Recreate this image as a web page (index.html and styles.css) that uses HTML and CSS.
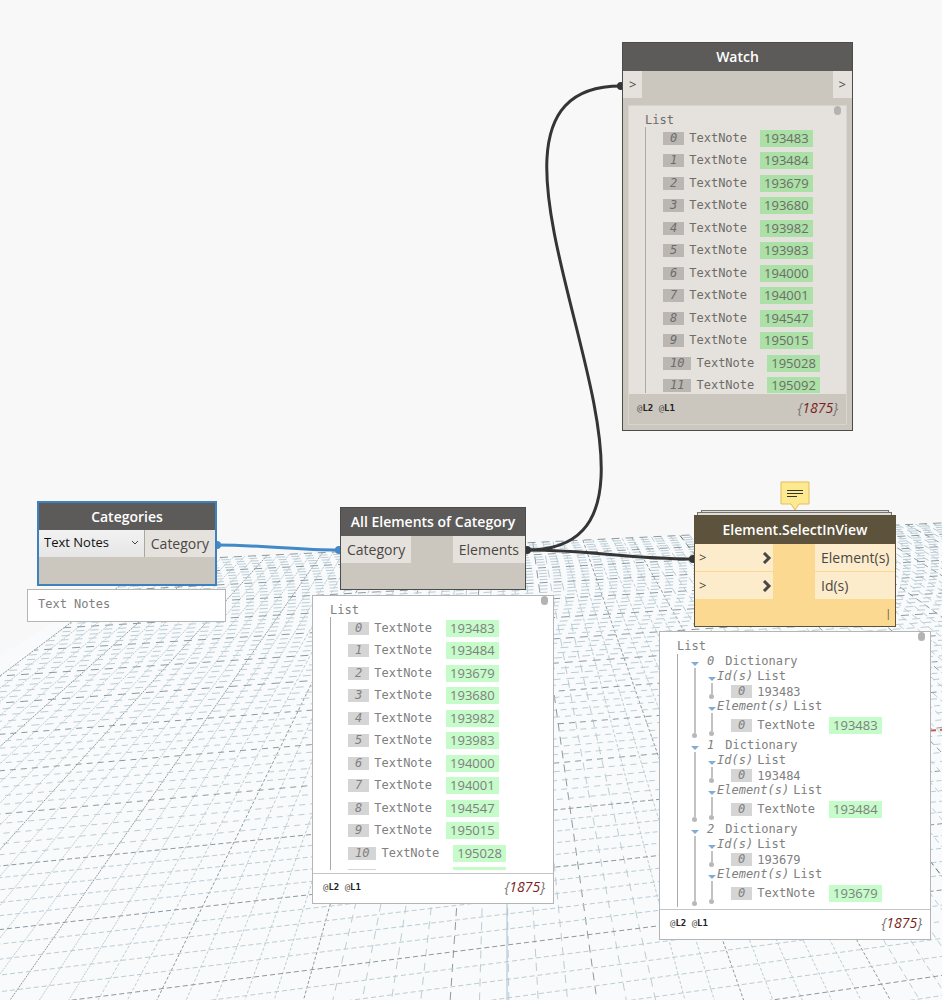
FILE: index.html
```html
<!DOCTYPE html>
<html lang="en">
<head>
<meta charset="utf-8">
<meta name="viewport" content="width=device-width, initial-scale=1">
<title>Node graph</title>
<link rel="stylesheet" href="styles.css">
</head>
<body>
<main class="workspace">
  <svg class="ground" id="ground" aria-hidden="true"></svg>

  <svg class="wires" aria-hidden="true">
    <path class="wire wire-active" d="M217 545C262 545 295 550 340 550"/>
    <path class="wire" d="M527 550C738 550 410 86 621 86"/>
    <path class="wire" d="M527 550C595 550 625 559 693 559"/>
    <circle class="plug-active" cx="217" cy="545" r="4"/>
    <circle class="plug-active" cx="339" cy="550" r="4"/>
    <circle class="plug" cx="527" cy="550" r="4"/>
    <circle class="plug" cx="621" cy="86" r="4"/>
    <circle class="plug" cx="693" cy="559" r="4"/>
  </svg>

  <section class="node node-watch">
    <h2 class="node-title">Watch</h2>
    <div class="ports">
      <span class="port port-tiny">&gt;</span>
      <span class="port port-tiny">&gt;</span>
    </div>
    <div class="panel panel-inset">
      <div class="panel-list">
        <p class="list-head">List</p>
        <ol class="items" data-count="12"></ol>
      </div>
      <footer class="panel-foot">
        <span class="levels"><i>@</i>L2 <i>@</i>L1</span>
        <span class="total"><i>{</i>1875<i>}</i></span>
      </footer>
      <span class="thumb"></span>
    </div>
  </section>

  <section class="node node-categories">
    <h2 class="node-title">Categories</h2>
    <div class="ports">
      <label class="picker">
        <select class="picker-select" aria-label="Category name"><option>Text Notes</option></select>
        <svg class="picker-arrow" viewBox="0 0 8 6" aria-hidden="true"><path d="M1 1l3 3 3-3"/></svg>
      </label>
      <span class="port port-last">Category</span>
    </div>
  </section>
  <p class="panel preview">Text Notes</p>

  <section class="node node-elements">
    <h2 class="node-title">All Elements of Category</h2>
    <div class="ports">
      <span class="port">Category</span>
      <span class="port">Elements</span>
    </div>
  </section>
  <div class="panel panel-elements">
    <div class="panel-list">
      <p class="list-head">List</p>
      <ol class="items" data-count="12"></ol>
    </div>
    <footer class="panel-foot">
      <span class="levels"><i>@</i>L2 <i>@</i>L1</span>
      <span class="total"><i>{</i>1875<i>}</i></span>
    </footer>
    <span class="thumb"></span>
  </div>

  <div class="sheet sheet-back"></div>
  <div class="sheet sheet-front"></div>
  <section class="node node-select">
    <h2 class="node-title">Element.SelectInView</h2>
    <div class="port-table">
      <span class="port port-wide">&gt;<svg class="chevron" viewBox="0 0 10 12" aria-hidden="true"><path d="M2 1l5 5-5 5"/></svg></span>
      <span class="port port-out">Element(s)</span>
      <span class="port port-wide">&gt;<svg class="chevron" viewBox="0 0 10 12" aria-hidden="true"><path d="M2 1l5 5-5 5"/></svg></span>
      <span class="port port-out">Id(s)</span>
    </div>
    <div class="lacing">|</div>
  </section>
  <svg class="note" viewBox="0 0 30 30" aria-hidden="true">
    <path class="note-shape" d="M1 1H29V23H19L15 29L11 23H1Z"/>
    <path class="note-lines" d="M7 9.500H23M7 12.500H23M7 15.500H17"/>
  </svg>
  <div class="panel panel-select">
    <div class="panel-list">
      <p class="list-head">List</p>
      <div class="items tree" id="tree"></div>
    </div>
    <footer class="panel-foot">
      <span class="levels"><i>@</i>L2 <i>@</i>L1</span>
      <span class="total"><i>{</i>1875<i>}</i></span>
    </footer>
    <span class="thumb"></span>
  </div>
</main>
<script src="graph.js"></script>
</body>
</html>
```

FILE: styles.css
```css
* { box-sizing: border-box; }

body {
  margin: 0;
  background: #f8f8f8;
  font-family: "Open Sans", "Noto Sans", sans-serif;
  color: #4a4845;
}

h2, p, ol { margin: 0; padding: 0; list-style: none; }

.workspace {
  position: relative;
  min-height: 100vh;
  overflow: hidden;
}

.ground, .wires {
  position: absolute;
  inset: 0;
  width: 100%;
  height: 100%;
}
.ground path { fill: none; }
.ground .floor { fill: #f8fafb; }
.ground .minor { stroke: #bccdd6; }
.ground .major { stroke: #8d999f; }
.ground .axis-x { stroke: #c85a60; stroke-width: 2; }
.ground .axis-y { stroke: #4f7358; }
.ground .axis-z { stroke: #a9bfd0; }

.wire { fill: none; stroke: #353535; stroke-width: 3; }
.wire-active { stroke: #4189c7; }
.plug { fill: #353535; }
.plug-active { fill: #4189c7; }

/* Nodes */
.node {
  position: absolute;
  display: flex;
  flex-direction: column;
  background: #cbc6be;
  border: 1px solid #4d4c4a;
}
.node-watch { left: 622px; top: 42px; width: 231px; }
.node-categories { left: 37px; top: 501px; width: 180px; height: 85px; border: 2px solid #3f82bb; }
.node-elements { left: 340px; top: 507px; width: 186px; height: 83px; }
.node-select { left: 694px; top: 515px; width: 202px; height: 112px; background: #fbd990; border-color: #5b523c; }

.node-title {
  height: 28px;
  background: #5d5b59;
  color: #fff;
  font-size: 14px;
  font-weight: 600;
  line-height: 28px;
  text-align: center;
  white-space: nowrap;
}
.node-categories .node-title { height: 27px; }
.node-select .node-title { background: #5d523c; }

.ports { display: flex; justify-content: space-between; height: 27px; }
.port {
  display: flex;
  align-items: center;
  justify-content: space-between;
  padding: 0 6px;
  background: #e5e1dc;
  font-size: 14px;
  line-height: 27px;
}
.port-tiny { font-size: 13px; }
.port-last { border-left: 1px solid #a9a7a3; }

.picker { position: relative; flex: 1; display: flex; }
.picker-select {
  width: 100%;
  padding: 0 5px 2px;
  appearance: none;
  border: 0;
  border-radius: 0;
  background: linear-gradient(#f2f2f2, #e6e6e6);
  color: #111;
  font: 13px/25px "Open Sans", sans-serif;
}
.picker-arrow { position: absolute; right: 5px; top: 10px; width: 8px; height: 6px; fill: none; stroke: #444; }

.port-table {
  display: grid;
  grid-template-columns: 78px 80px;
  grid-auto-rows: 27px;
  justify-content: space-between;
  row-gap: 1px;
}
.node-select .port { background: #fdeccb; }
.port-out { white-space: nowrap; }
.port-wide { padding: 0 1px 0 4px; font-size: 13px; }
.chevron { width: 10px; height: 12px; fill: none; stroke: #4a4845; stroke-width: 3; }
.lacing { padding-right: 4px; text-align: right; font-size: 10px; line-height: 28px; }

.sheet { position: absolute; height: 5px; border: 1px solid #77746e; background: #deddda; }
.sheet-back { left: 701px; top: 510px; width: 188px; }
.sheet-front { left: 697px; top: 512px; width: 195px; }

.note { position: absolute; left: 780px; top: 481px; width: 30px; height: 30px; }
.note-shape { fill: #fdea90; stroke: #e9b95c; }
.note-lines { stroke: #333; stroke-width: 1; }

/* Preview panels */
.panel {
  position: absolute;
  display: flex;
  flex-direction: column;
  background: #fff;
  border: 1px solid #b5b5b5;
  font-family: "DejaVu Sans Mono", monospace;
  font-size: 12px;
  color: #808080;
}
.preview { left: 27px; top: 589px; width: 199px; height: 33px; padding-left: 10px; line-height: 29px; }
.panel-elements { left: 312px; top: 595px; width: 242px; }
.panel-select { left: 659px; top: 631px; width: 272px; }
.panel-inset {
  position: relative;
  margin: 7px 5px 5px;
  border-color: #d8d4ce;
  background: #e5e1dc;
  color: #6e6c69;
}

.panel-list { height: 277px; padding: 7px 0 0 17px; overflow: hidden; }
.panel-inset .panel-list { height: 288px; padding-left: 16px; }
.list-head { line-height: 15px; }
.items {
  display: grid;
  grid-auto-rows: 22px 23px;
  height: 253px;
  overflow: hidden;
  padding-left: 17px;
  border-left: 1px solid #aaa;
}
.panel-inset .items { height: 266px; }
.panel-inset .list-head { line-height: 14px; }
.panel-elements .list-head { line-height: 14px; }

.item { display: flex; align-items: center; height: 22px; white-space: nowrap; }
.index {
  padding: 0 7px;
  margin-right: 5px;
  background: #d5d5d5;
  font-style: italic;
  line-height: 13px;
}
.value {
  margin-left: 14px;
  padding: 0 4px;
  background: #c6fbca;
  font: 13px/17px "Open Sans", sans-serif;
}
.panel-inset .index { background: #bab7b3; }
.panel-inset .value { margin-left: 13px; background: #abe0a6; }

.panel-foot {
  display: flex;
  align-items: center;
  justify-content: space-between;
  height: 30px;
  padding: 0 8px 3px 10px;
  border-top: 1px solid #c5c5c5;
}
.panel-inset .panel-foot { background: #cbc6be; border-color: #cbc6be; padding-left: 8px; }
.levels { font-size: 9px; font-weight: 700; color: #222; }
.levels i { font-style: normal; font-weight: 400; color: #555; }
.total { font: italic 14px/20px "Open Sans", sans-serif; color: #7a1f22; }
.total i { color: #777; }
.thumb { position: absolute; right: 5px; top: 0; width: 7px; height: 9px; border-radius: 4px; background: #b3b3b3; }

/* Dictionary tree */
.tree { display: block; padding-left: 12px; }
.branch { display: flex; }
.tree > .branch { height: 84px; }
.gutter { display: flex; flex-direction: column; align-items: center; width: 9px; padding-top: 8px; }
.arrow { border: 4px solid transparent; border-top: 4px solid #83add0; border-bottom: 0; }
.stem { flex: 1; width: 2px; margin-top: 2px; background: #c2c2c2; }
.dot { width: 5px; height: 5px; border-radius: 50%; background: #b8b8b8; }
.branch-body { padding-left: 8px; }
.branch .branch .branch-body { padding-left: 1px; }
.branch-name { display: flex; gap: 4px; line-height: 15px; }
.dict-name { gap: 11px; }
.branch-name i { font-style: italic; }
.branch-body .item { height: 15px; padding-left: 14px; }
.branch-body .item-tall { height: 22px; }
```

FILE: graph.js
```js
const ids = [193483, 193484, 193679, 193680, 193982, 193983, 194000, 194001, 194547, 195015, 195028, 195092];

const item = (tag, index, label, value, extra = "") =>
  `<${tag} class="item ${extra}"><span class="index">${index}</span>${label}` +
  (value ? `<span class="value">${value}</span>` : "") + `</${tag}>`;

document.querySelectorAll("ol.items").forEach((list) => {
  list.innerHTML = ids.slice(0, +list.dataset.count).map((id, i) => item("li", i, "TextNote", id)).join("");
});

const gutter = '<span class="gutter"><span class="arrow"></span><span class="stem"></span><span class="dot"></span></span>';
const branch = (name, kind, body, extra = "") =>
  `<div class="branch">${gutter}<div class="branch-body"><p class="branch-name ${extra}"><i>${name}</i>${kind}</p>${body}</div></div>`;

document.getElementById("tree").innerHTML = ids.slice(0, 4).map((id, i) =>
  branch(i, "Dictionary",
    branch("Id(s)", "List", item("div", 0, id)) +
    branch("Element(s)", "List", item("div", 0, "TextNote", id, "item-tall")),
    "dict-name")).join("");

/* Ground plane: two families of lines, each meeting at its own vanishing point. */
const horizon = 300, nearX = 499, farX = 5600;
const bottom = 1400;
const rowAtLeft = (k) => 1 / (0.00141 + 0.0001785 * k);
const slopeOf = (x1000) => (nearX - x1000) / 700;

/* Crossing of a row (drop at x = 0) with a column (x at y = 1000). */
function cross(drop, x1000) {
  const m = slopeOf(x1000);
  const d = drop * (1 - nearX / farX) / (1 - (drop * m) / farX);
  return [nearX - m * d, horizon + d];
}
const fmt = (p) => p[0].toFixed(1) + " " + p[1].toFixed(1);
const topDrop = rowAtLeft(13);
const leftCol = -430, step = 146.7;
const parts = [];

parts.push(`<path class="floor" d="M${fmt(cross(topDrop, leftCol))}L${fmt(cross(topDrop, leftCol + step * 20))}L2600 ${bottom}L-1200 ${bottom}Z"/>`);

for (let i = 0; i <= 100; i++) {
  const x1000 = leftCol + (step * i) / 5;
  const from = cross(topDrop, x1000);
  const to = [nearX - slopeOf(x1000) * (bottom - horizon), bottom];
  const kind = i === 50 ? "axis-y" : i % 5 ? "minor" : "major";
  const lean = Math.abs(slopeOf(x1000));
  const dash = lean < 0.25 ? "8 6" : lean < 0.6 ? "3 2" : x1000 < nearX ? "2 1" : "6 4";
  parts.push(`<path class="${kind}" stroke-dasharray="${dash}" d="M${fmt(from)}L${fmt(to)}"/>`);
}

for (let j = -25; j <= 65; j++) {
  const drop = rowAtLeft(j / 5);
  const from = cross(drop, leftCol);
  const to = cross(drop, leftCol + step * 20);
  const kind = j % 5 ? "minor" : "major";
  const dash = j > 25 ? "8 6" : j > 10 ? "6 5" : "5 3";
  parts.push(`<path class="${kind}" stroke-dasharray="${dash}" stroke-dashoffset="${(j * 5) % 14}" d="M${fmt(from)}L${fmt(to)}"/>`);
}
parts.push('<path class="axis-x" stroke-dasharray="5 4" d="M931 730.500L960 728.500"/>');
parts.push('<path class="axis-z" d="M507 900V1400"/>');
document.getElementById("ground").innerHTML = parts.join("");
```
